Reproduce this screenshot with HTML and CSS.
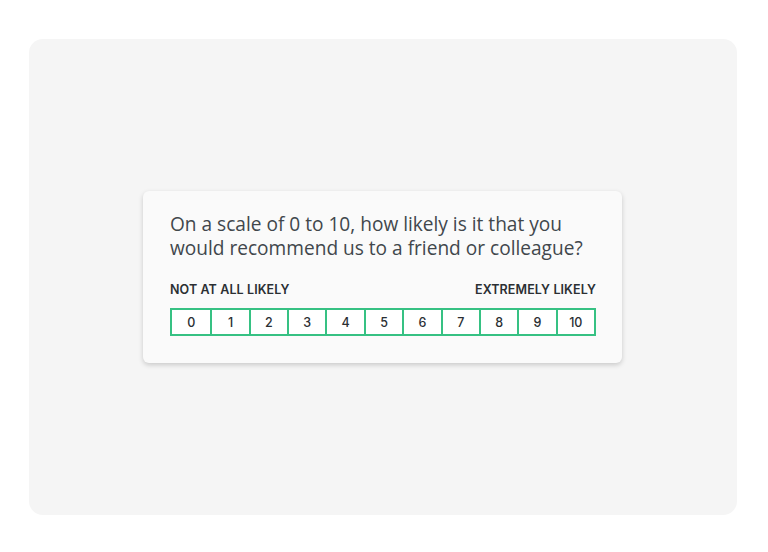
FILE: index.html
```html
<!DOCTYPE html>
<html>
<head>
<meta charset="utf-8">
<link rel="stylesheet" href="styles.css">
</head>
<body>
<div class="panel">
  <div class="card">
    <p class="question">On a scale of 0 to 10, how likely is it that you would recommend us to a friend or colleague?</p>
    <div class="labels"><span>NOT AT ALL LIKELY</span><span>EXTREMELY LIKELY</span></div>
    <div class="scale">
      <div class="cell">0</div><div class="cell">1</div><div class="cell">2</div><div class="cell">3</div><div class="cell">4</div><div class="cell">5</div><div class="cell">6</div><div class="cell">7</div><div class="cell">8</div><div class="cell">9</div><div class="cell">10</div>
    </div>
  </div>
</div>
</body>
</html>
```
FILE: styles.css
```css
html, body { margin: 0; padding: 0; background: #fff; }
body {
  width: 768px; height: 552px;
  padding: 39px 31px 37px 29px;
  box-sizing: border-box;
  font-family: "Open Sans", "Liberation Sans", sans-serif;
}
.panel {
  width: 708px; height: 476px;
  background: #f5f5f5;
  border-radius: 14px;
  display: flex; align-items: center; justify-content: center;
}
.card {
  width: 479px;
  box-sizing: border-box;
  background: #fafafa;
  border-radius: 6px;
  box-shadow: 0 2px 5px rgba(0,0,0,0.18);
  padding: 21px 26px 27px 27px;
  margin-left: -1px;
}
.question {
  margin: 0;
  font-size: 19.1px;
  line-height: 24px;
  color: #41474c;
}
.labels {
  display: flex; justify-content: space-between;
  margin-top: 23px;
  font-family: "Inter", "Open Sans", sans-serif;
  font-size: 12.5px; font-weight: 600;
  letter-spacing: 0.1px;
  color: #2b2f33;
  line-height: 14px;
}
.scale {
  margin-top: 11px;
  display: grid;
  grid-template-columns: repeat(11, 1fr);
  border: 2px solid #36c183;
  height: 28px;
  box-sizing: border-box;
}
.cell {
  display: flex; align-items: center; justify-content: center;
  font-family: "Inter", "Open Sans", sans-serif;
  font-size: 12.5px; font-weight: 500; color: #2b2f33;
  border-left: 2px solid #36c183;
  background: #fff;
}
.cell:first-child { border-left: none; }
```
